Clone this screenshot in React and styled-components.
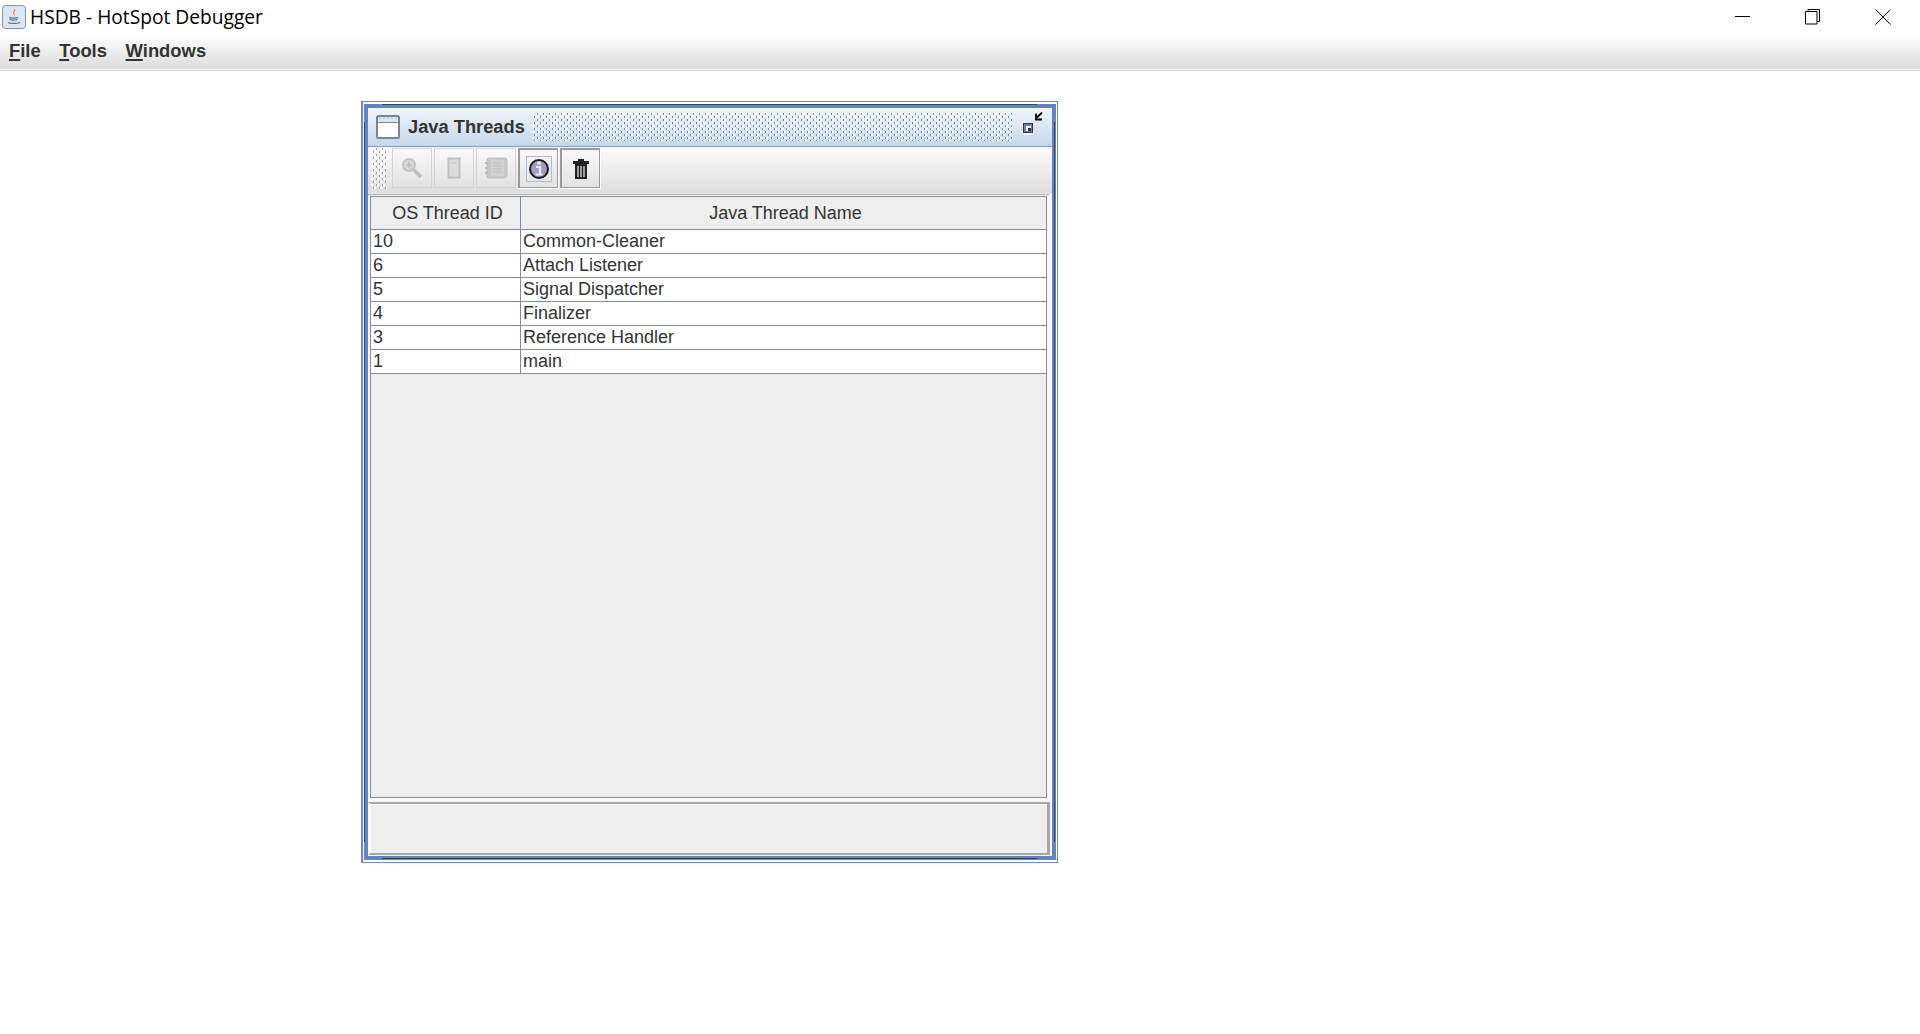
import styled, { createGlobalStyle } from "styled-components";

const GlobalStyle = createGlobalStyle`
  html, body {
    margin: 0;
    padding: 0;
    background: #fff;
    height: 100%;
    overflow: hidden;
  }
`;

const threads = [
  { id: "10", name: "Common-Cleaner" },
  { id: "6", name: "Attach Listener" },
  { id: "5", name: "Signal Dispatcher" },
  { id: "4", name: "Finalizer" },
  { id: "3", name: "Reference Handler" },
  { id: "1", name: "main" },
];

const Page = styled.div`
  width: 1920px;
  height: 1034px;
  display: flex;
  flex-direction: column;
  background: #fff;
`;

const TitleBar = styled.div`
  height: 34px;
  display: flex;
  align-items: center;
  padding-left: 2px;
  flex-shrink: 0;
`;

const AppName = styled.div`
  font-family: "Open Sans", sans-serif;
  font-size: 19.2px;
  color: #000;
  margin-left: 4px;
  margin-top: -1px;
`;

const WinButtons = styled.div`
  margin-left: auto;
  margin-right: 2px;
  display: flex;
  height: 34px;
`;

const WinButton = styled.div`
  width: 70px;
  display: flex;
  align-items: center;
  justify-content: center;
`;

const MenuBar = styled.div`
  height: 35px;
  flex-shrink: 0;
  display: flex;
  align-items: center;
  gap: 18.6px;
  padding: 0 0 2px 9px;
  box-sizing: border-box;
  background: linear-gradient(#fff, #dcdcdc);
  font-family: "Liberation Sans", sans-serif;
  font-weight: bold;
  font-size: 18.4px;
  color: #333;
`;

const MenuRule = styled.div`
  height: 2px;
  flex-shrink: 0;
  box-sizing: border-box;
  border-bottom: 1px solid #cfcfcf;
`;

const Mnemonic = styled.span`
  text-decoration: underline;
  text-decoration-thickness: 1.5px;
  text-underline-offset: 2px;
`;

const Desktop = styled.div`
  flex: 1;
  padding: 30px 0 0 361px;
`;

const Frame = styled.div`
  width: 697px;
  height: 762px;
  box-sizing: border-box;
  border-style: solid;
  border-color: #6a8bc9;
  border-width: 1px 1px 1px 2px;
  padding: 2px 1px 2px 1px;
  background: #fff;
`;

const FrameInner = styled.div`
  position: relative;
  height: 100%;
  box-sizing: border-box;
  border: 4px solid #6383c6;
  background: #fff;
  display: flex;
  flex-direction: column;

  &::before {
    content: "";
    position: absolute;
    top: -4px;
    bottom: -3px;
    left: 14px;
    right: 15px;
    border-top: 1px solid #3c4654;
    border-bottom: 1px solid #3c4654;
    pointer-events: none;
  }

  &::after {
    content: "";
    position: absolute;
    left: -4px;
    right: -3px;
    top: 14px;
    bottom: 14px;
    border-left: 1px solid #3c4654;
    border-right: 1px solid #3c4654;
    pointer-events: none;
  }
`;

const FrameTitle = styled.div`
  height: 39px;
  flex-shrink: 0;
  box-sizing: border-box;
  display: flex;
  align-items: center;
  padding: 0 7px 0 8px;
  background: linear-gradient(#f1f6fb, #c4d7eb);
  border-bottom: 1px solid #7c9ccf;
`;

const FrameName = styled.div`
  font-family: "Liberation Sans", sans-serif;
  font-weight: bold;
  font-size: 18.3px;
  color: #333;
  margin-left: 8px;
  width: 117px;
  white-space: nowrap;
`;

const Bumps = styled.svg`
  display: block;
  margin-left: 7px;
  flex-shrink: 0;
`;

const FrameControl = styled.svg`
  display: block;
  margin: -6px 0 0 auto;
  flex-shrink: 0;
`;

const ToolBar = styled.div`
  height: 47px;
  flex-shrink: 0;
  box-sizing: border-box;
  display: flex;
  align-items: flex-start;
  gap: 2px;
  padding: 1px 0 0 3px;
  background: linear-gradient(#fbfbfb, #dedede);
  border-bottom: 1px solid #ececec;
`;

const Grip = styled.svg`
  display: block;
  margin: 0 3px 0 0;
  flex-shrink: 0;
`;

const ToolButton = styled.div`
  width: 40px;
  height: 40px;
  box-sizing: border-box;
  display: flex;
  align-items: center;
  justify-content: center;
  border: ${(p) => (p.$enabled ? "2px solid #9a9a9a" : "1px solid #d4d4d4")};
  border-bottom-width: 1px;
  border-right-width: 1px;
  box-shadow: ${(p) => (p.$enabled ? "1px 1px 0 #fff" : "none")};
`;

const Content = styled.div`
  flex: 1;
  display: flex;
  flex-direction: column;
  min-height: 0;
  background: #f8f8f8;
`;

const TableScroll = styled.div`
  margin-right: 3px;
  padding: 1px 2px 0;
  border-top: 1px solid #a9adb0;
`;

const Table = styled.div`
  height: 602px;
  box-sizing: border-box;
  border: 1px solid #7f8f9f;
  background: #eee;
  font-family: "Liberation Sans", sans-serif;
  font-size: 18px;
  color: #333;
`;

const Row = styled.div`
  display: grid;
  grid-template-columns: 150px 1fr;
  height: 24px;
  box-sizing: border-box;
  border-bottom: 1px solid #7c8ea4;
  background: #fff;
  line-height: 23px;
`;

const Cell = styled.div`
  padding-left: 2px;
  border-right: 1px solid #7c8ea4;
  white-space: nowrap;
  &:last-child {
    border-right: none;
  }
`;

const HeaderRow = styled(Row)`
  height: 33px;
  background: #eee;
  line-height: 32px;
`;

const HeaderCell = styled(Cell)`
  text-align: center;
  padding-left: 4px;
`;

const Status = styled.div`
  height: 53px;
  margin: 4px 2px 1px 0;
  box-sizing: border-box;
  border-style: solid;
  border-color: #a6a6a6;
  border-left-color: #fbfbfb;
  border-width: 2px 3px 2px 3px;
  background: #eee;
  box-shadow: inset 0 1px 0 #fff;
`;

const JavaIcon = () => (
  <svg width="24" height="24" viewBox="0 0 24 24">
    <rect x=".5" y=".5" width="23" height="23" rx="3" fill="#dde5ee" stroke="#7f93ab" />
    <path d="M12.500 3c1.500 2-2.500 3-1 5.500.4.7 1 1.200 .8 2 1.200-1.300-1-2.200.2-4 .6-.9 1.300-1.700 0-3.500z" fill="#d9641e" />
    <path d="M7 12.500c2 .7 7 .7 9 0M7.500 14.500c2 .6 6 .6 8 0M6 17.500c3 1.200 9 1.200 12 0" fill="none" stroke="#4f6f94" strokeWidth="1.200" />
  </svg>
);

const FrameIcon = () => (
  <svg width="24" height="24" viewBox="0 0 24 24">
    <rect x="1" y="1" width="22" height="22" rx="1.500" fill="#fff" stroke="#75889b" strokeWidth="2" />
    <rect x="2" y="2" width="20" height="5" fill="#dce6f0" />
    <path d="M3 3h18" stroke="#a9bbd0" strokeDasharray="2 2" />
    <path d="M2 7.500h20" stroke="#75889b" />
  </svg>
);

const ZoomIcon = () => (
  <svg width="22" height="22" viewBox="0 0 22 22">
    <circle cx="8" cy="8" r="6" fill="#d8d8d8" stroke="#c4c4c4" strokeWidth="2" />
    <path d="M5 8h6M8 5v6" stroke="#bdbdbd" strokeWidth="1.500" />
    <path d="M13 13l7 7" stroke="#bcbcbc" strokeWidth="3.500" />
  </svg>
);

const PageIcon = () => (
  <svg width="14" height="22" viewBox="0 0 14 22">
    <rect x="1.500" y="1.500" width="11" height="19" fill="#dcdcdc" stroke="#c0c0c0" strokeWidth="2" />
    <path d="M4 6h6" stroke="#c8c8c8" />
  </svg>
);

const BookIcon = () => (
  <svg width="24" height="22" viewBox="0 0 24 22">
    <rect x="3" y="1" width="20" height="20" rx="2" fill="#c8c8c8" stroke="#c0c0c0" />
    <rect x="7" y="3" width="13" height="16" fill="#d2d2d2" />
    <path d="M9 6h9M9 9h9M9 12h9M9 15h9" stroke="#c0c0c0" />
    <path d="M1 6h3M1 11h3M1 16h3" stroke="#b8b8b8" strokeWidth="2" />
  </svg>
);

const InfoIcon = () => (
  <svg width="26" height="26" viewBox="0 0 26 26">
    <rect x=".5" y=".5" width="25" height="25" fill="none" stroke="#a9bdd3" />
    <circle cx="13" cy="13" r="9" fill="#a49bc0" stroke="#1a1a22" strokeWidth="2" />
    <path d="M13 5.500v3" stroke="#eceaf2" strokeWidth="3.500" />
    <path d="M10 11h4v7M9.500 18.500h7" fill="none" stroke="#eceaf2" strokeWidth="2.200" />
  </svg>
);

const TrashIcon = () => (
  <svg width="18" height="22" viewBox="0 0 18 22">
    <path d="M1 3h16v3H1zM6 1h6v2H6z" fill="#222" />
    <rect x="3" y="6" width="12" height="15" fill="#222" />
    <path d="M6 8v11M9 8v11M12 8v11" stroke="#aaa" strokeWidth="1.800" />
  </svg>
);

const App = () => (
  <Page>
    <GlobalStyle />
    <TitleBar>
      <JavaIcon />
      <AppName>HSDB - HotSpot Debugger</AppName>
      <WinButtons>
        <WinButton>
          <svg width="16" height="16" viewBox="0 0 16 16">
            <path d="M0 7.500h15" stroke="#000" />
          </svg>
        </WinButton>
        <WinButton>
          <svg width="16" height="16" viewBox="0 0 16 16">
            <path d="M.5 2.500h11.500v12.500H.5zM3 2.500V.5h11.500v12h-2.500" fill="none" stroke="#000" />
          </svg>
        </WinButton>
        <WinButton>
          <svg width="16" height="16" viewBox="0 0 16 16">
            <path d="M.5.5l15 15M15.500.5l-15 15" stroke="#000" />
          </svg>
        </WinButton>
      </WinButtons>
    </TitleBar>
    <MenuBar>
      <div><Mnemonic>F</Mnemonic>ile</div>
      <div><Mnemonic>T</Mnemonic>ools</div>
      <div><Mnemonic>W</Mnemonic>indows</div>
    </MenuBar>
    <MenuRule />
    <Desktop>
      <Frame>
        <FrameInner>
          <FrameTitle>
            <FrameIcon />
            <FrameName>Java Threads</FrameName>
            <Bumps width="481" height="28" shapeRendering="crispEdges">
              <defs>
                <pattern id="bump" width="6" height="6" patternUnits="userSpaceOnUse">
                  <rect x="0" y="0" width="2" height="2" fill="#fff" />
                  <rect x="3" y="3" width="2" height="2" fill="#fff" />
                  <rect x="2" y="3" width="1" height="2" fill="#5f86c4" />
                  <rect x="5" y="0" width="1" height="2" fill="#5f86c4" />
                </pattern>
              </defs>
              <rect width="481" height="28" fill="url(#bump)" />
            </Bumps>
            <FrameControl width="24" height="24" viewBox="0 0 24 24">
              <rect x="2.500" y="11.500" width="9" height="9" fill="#6383c6" stroke="#333" />
              <rect x="5" y="14" width="5" height="5" fill="#fff" />
              <rect x="7" y="16" width="3" height="3" fill="#333" />
              <rect x="2" y="21" width="11" height="2" fill="#fff" />
              <path d="M21 .5l-5 5M15 1.500v6h6" fill="none" stroke="#000" strokeWidth="1.800" />
            </FrameControl>
          </FrameTitle>
          <ToolBar>
            <Grip width="16" height="42" shapeRendering="crispEdges">
              <defs>
                <pattern id="grip" width="6" height="6" patternUnits="userSpaceOnUse">
                  <rect x="0" y="0" width="2" height="2" fill="#fff" />
                  <rect x="3" y="3" width="2" height="2" fill="#fff" />
                  <rect x="2" y="3" width="1" height="2" fill="#9a9a9a" />
                  <rect x="5" y="0" width="1" height="2" fill="#9a9a9a" />
                </pattern>
              </defs>
              <rect width="16" height="42" fill="url(#grip)" />
            </Grip>
            <ToolButton><ZoomIcon /></ToolButton>
            <ToolButton><PageIcon /></ToolButton>
            <ToolButton><BookIcon /></ToolButton>
            <ToolButton $enabled><InfoIcon /></ToolButton>
            <ToolButton $enabled><TrashIcon /></ToolButton>
          </ToolBar>
          <Content>
            <TableScroll>
              <Table>
                <HeaderRow>
                  <HeaderCell>OS Thread ID</HeaderCell>
                  <HeaderCell>Java Thread Name</HeaderCell>
                </HeaderRow>
                {threads.map((t) => (
                  <Row key={t.id}>
                    <Cell>{t.id}</Cell>
                    <Cell>{t.name}</Cell>
                  </Row>
                ))}
              </Table>
            </TableScroll>
            <Status />
          </Content>
        </FrameInner>
      </Frame>
    </Desktop>
  </Page>
);

export default App;
